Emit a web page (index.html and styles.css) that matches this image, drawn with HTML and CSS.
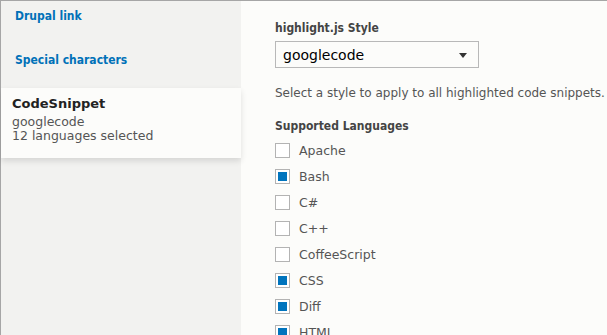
FILE: index.html
```html
<!DOCTYPE html>
<html lang="en">
<head>
    <meta charset="UTF-8">
    <title>CodeSnippet settings</title>
    <link rel="stylesheet" href="styles.css">
</head>
<body>

    <div class="vertical-tabs">
        <!-- Tab menu -->
        <ul class="tabs-menu">
            <li class="tab-item"><a href="#">Drupal link</a></li>
            <li class="tab-item"><a href="#">Special characters</a></li>
            <li class="tab-item selected">
                <a href="#">
                    <strong>CodeSnippet</strong>
                    <span class="summary">googlecode<br>12 languages selected</span>
                </a>
            </li>
        </ul>

        <!-- Tab pane -->
        <div class="tabs-pane">
            <div class="form-item">
                <label class="form-label">highlight.js Style</label>
                <div class="select">
                    <span>googlecode</span>
                    <span class="arrow"></span>
                </div>
                <p class="description">Select a style to apply to all highlighted code snippets.</p>
            </div>

            <div class="form-item">
                <label class="form-label">Supported Languages</label>
                <div class="checkboxes">
                    <label class="checkbox"><span class="box"></span>Apache</label>
                    <label class="checkbox"><span class="box checked"></span>Bash</label>
                    <label class="checkbox"><span class="box"></span>C#</label>
                    <label class="checkbox"><span class="box"></span>C++</label>
                    <label class="checkbox"><span class="box"></span>CoffeeScript</label>
                    <label class="checkbox"><span class="box checked"></span>CSS</label>
                    <label class="checkbox"><span class="box checked"></span>Diff</label>
                    <label class="checkbox"><span class="box checked"></span>HTML</label>
                </div>
            </div>
        </div>
    </div>

</body>
</html>
```

FILE: styles.css
```css
/* General Styles */
body {
    margin: 0;
    font-family: "DejaVu Sans", sans-serif;
    color: #333;
    background: #fcfcfa;
    overflow: hidden;
}

.vertical-tabs {
    display: flex;
    height: 335px;
    border-top: 1px solid #a6a6a6;
    border-left: 1px solid #a6a6a6;
}

/* Tab menu */
.tabs-menu {
    list-style: none;
    margin: 0;
    padding: 0;
    width: 240px;
    flex-shrink: 0;
    background: #f2f2f0;
}

.tab-item a {
    display: block;
    text-decoration: none;
    color: #0071b8;
    font-family: "DejaVu Sans Condensed", "DejaVu Sans", sans-serif;
    font-weight: bold;
    font-size: 12px;
    padding: 0 14px;
    height: 44px;
    line-height: 32px;
}

.tab-item:first-child {
    margin-top: -1px;
}

.tab-item.selected {
    background: #fcfcfa;
    box-shadow: 0 3px 6px rgba(0, 0, 0, 0.12);
}

.tab-item.selected a {
    height: auto;
    line-height: 13px;
    padding: 9px 11px 15px;
    color: #222;
}

.tab-item.selected strong {
    display: block;
    font-family: "DejaVu Sans", sans-serif;
    font-size: 13px;
    line-height: 14px;
    margin-bottom: 4px;
}

.summary {
    font-family: "DejaVu Sans", sans-serif;
    font-weight: normal;
    color: #555;
    font-size: 12.5px;
}

/* Pane */
.tabs-pane {
    flex: 1;
    padding: 20px 0 0 34px;
    white-space: nowrap;
}

.form-item {
    margin-bottom: 19px;
}

.form-label {
    display: block;
    font-family: "DejaVu Sans Condensed", "DejaVu Sans", sans-serif;
    font-weight: bold;
    color: #444;
    font-size: 12px;
    line-height: 14px;
    margin-bottom: 6px;
}

.select {
    height: 25px;
    width: 184px;
    border: 1px solid #b8b8b8;
    display: flex;
    align-items: center;
    justify-content: space-between;
    padding: 0 11px 0 7px;
    font-size: 14px;
    color: #000;
}

.arrow {
    width: 0;
    height: 0;
    border-left: 4px solid transparent;
    border-right: 4px solid transparent;
    border-top: 5px solid #333;
    margin-top: 2px;
}

.description {
    margin: 18px 0 0;
    font-size: 12px;
    line-height: 14px;
    color: #555;
}

.checkboxes {
    display: flex;
    flex-direction: column;
    gap: 11px;
    margin-top: 10px;
}

.checkbox {
    display: flex;
    align-items: center;
    gap: 9px;
    height: 15px;
    color: #555;
    font-size: 12.5px;
}

.box {
    width: 13px;
    height: 13px;
    border: 1px solid #b3b3b3;
    background: #fff;
    display: flex;
    align-items: center;
    justify-content: center;
}

.box.checked::after {
    content: "";
    width: 9px;
    height: 9px;
    background: #0074bd;
}
```
